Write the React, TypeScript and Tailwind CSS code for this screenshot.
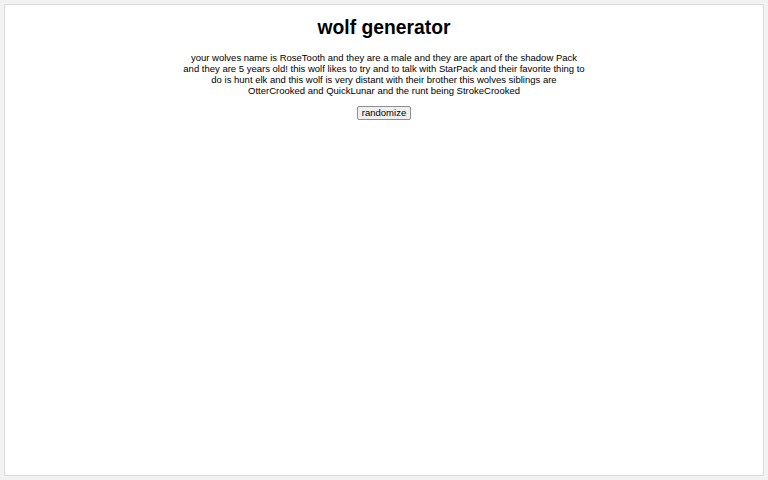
export default function App() {
  return (
    <div className="h-[480px] bg-[#f2f2f2] p-[4px] font-['Liberation_Sans',Arial,sans-serif] text-black">
      <div className="h-full border border-[#dcdcdc] bg-white flex flex-col items-center">
        <h1 className="mt-[9px] text-[19.3px] font-bold leading-[28px]">wolf generator</h1>
        <p className="mt-[10px] w-[403px] text-center text-[9.5px] leading-[11px]">
          your wolves name is RoseTooth and they are a male and they are apart of the shadow Pack
          and they are 5 years old! this wolf likes to try and to talk with StarPack and their favorite
          thing to do is hunt elk and this wolf is very distant with their brother this wolves siblings
          are OtterCrooked and QuickLunar and the runt being StrokeCrooked
        </p>
        <button className="mt-[10px] border border-[#8f8f8f] bg-[#efefef] px-[4px] text-[9.5px] leading-[12px] rounded-[2px]">
          randomize
        </button>
      </div>
    </div>
  );
}
